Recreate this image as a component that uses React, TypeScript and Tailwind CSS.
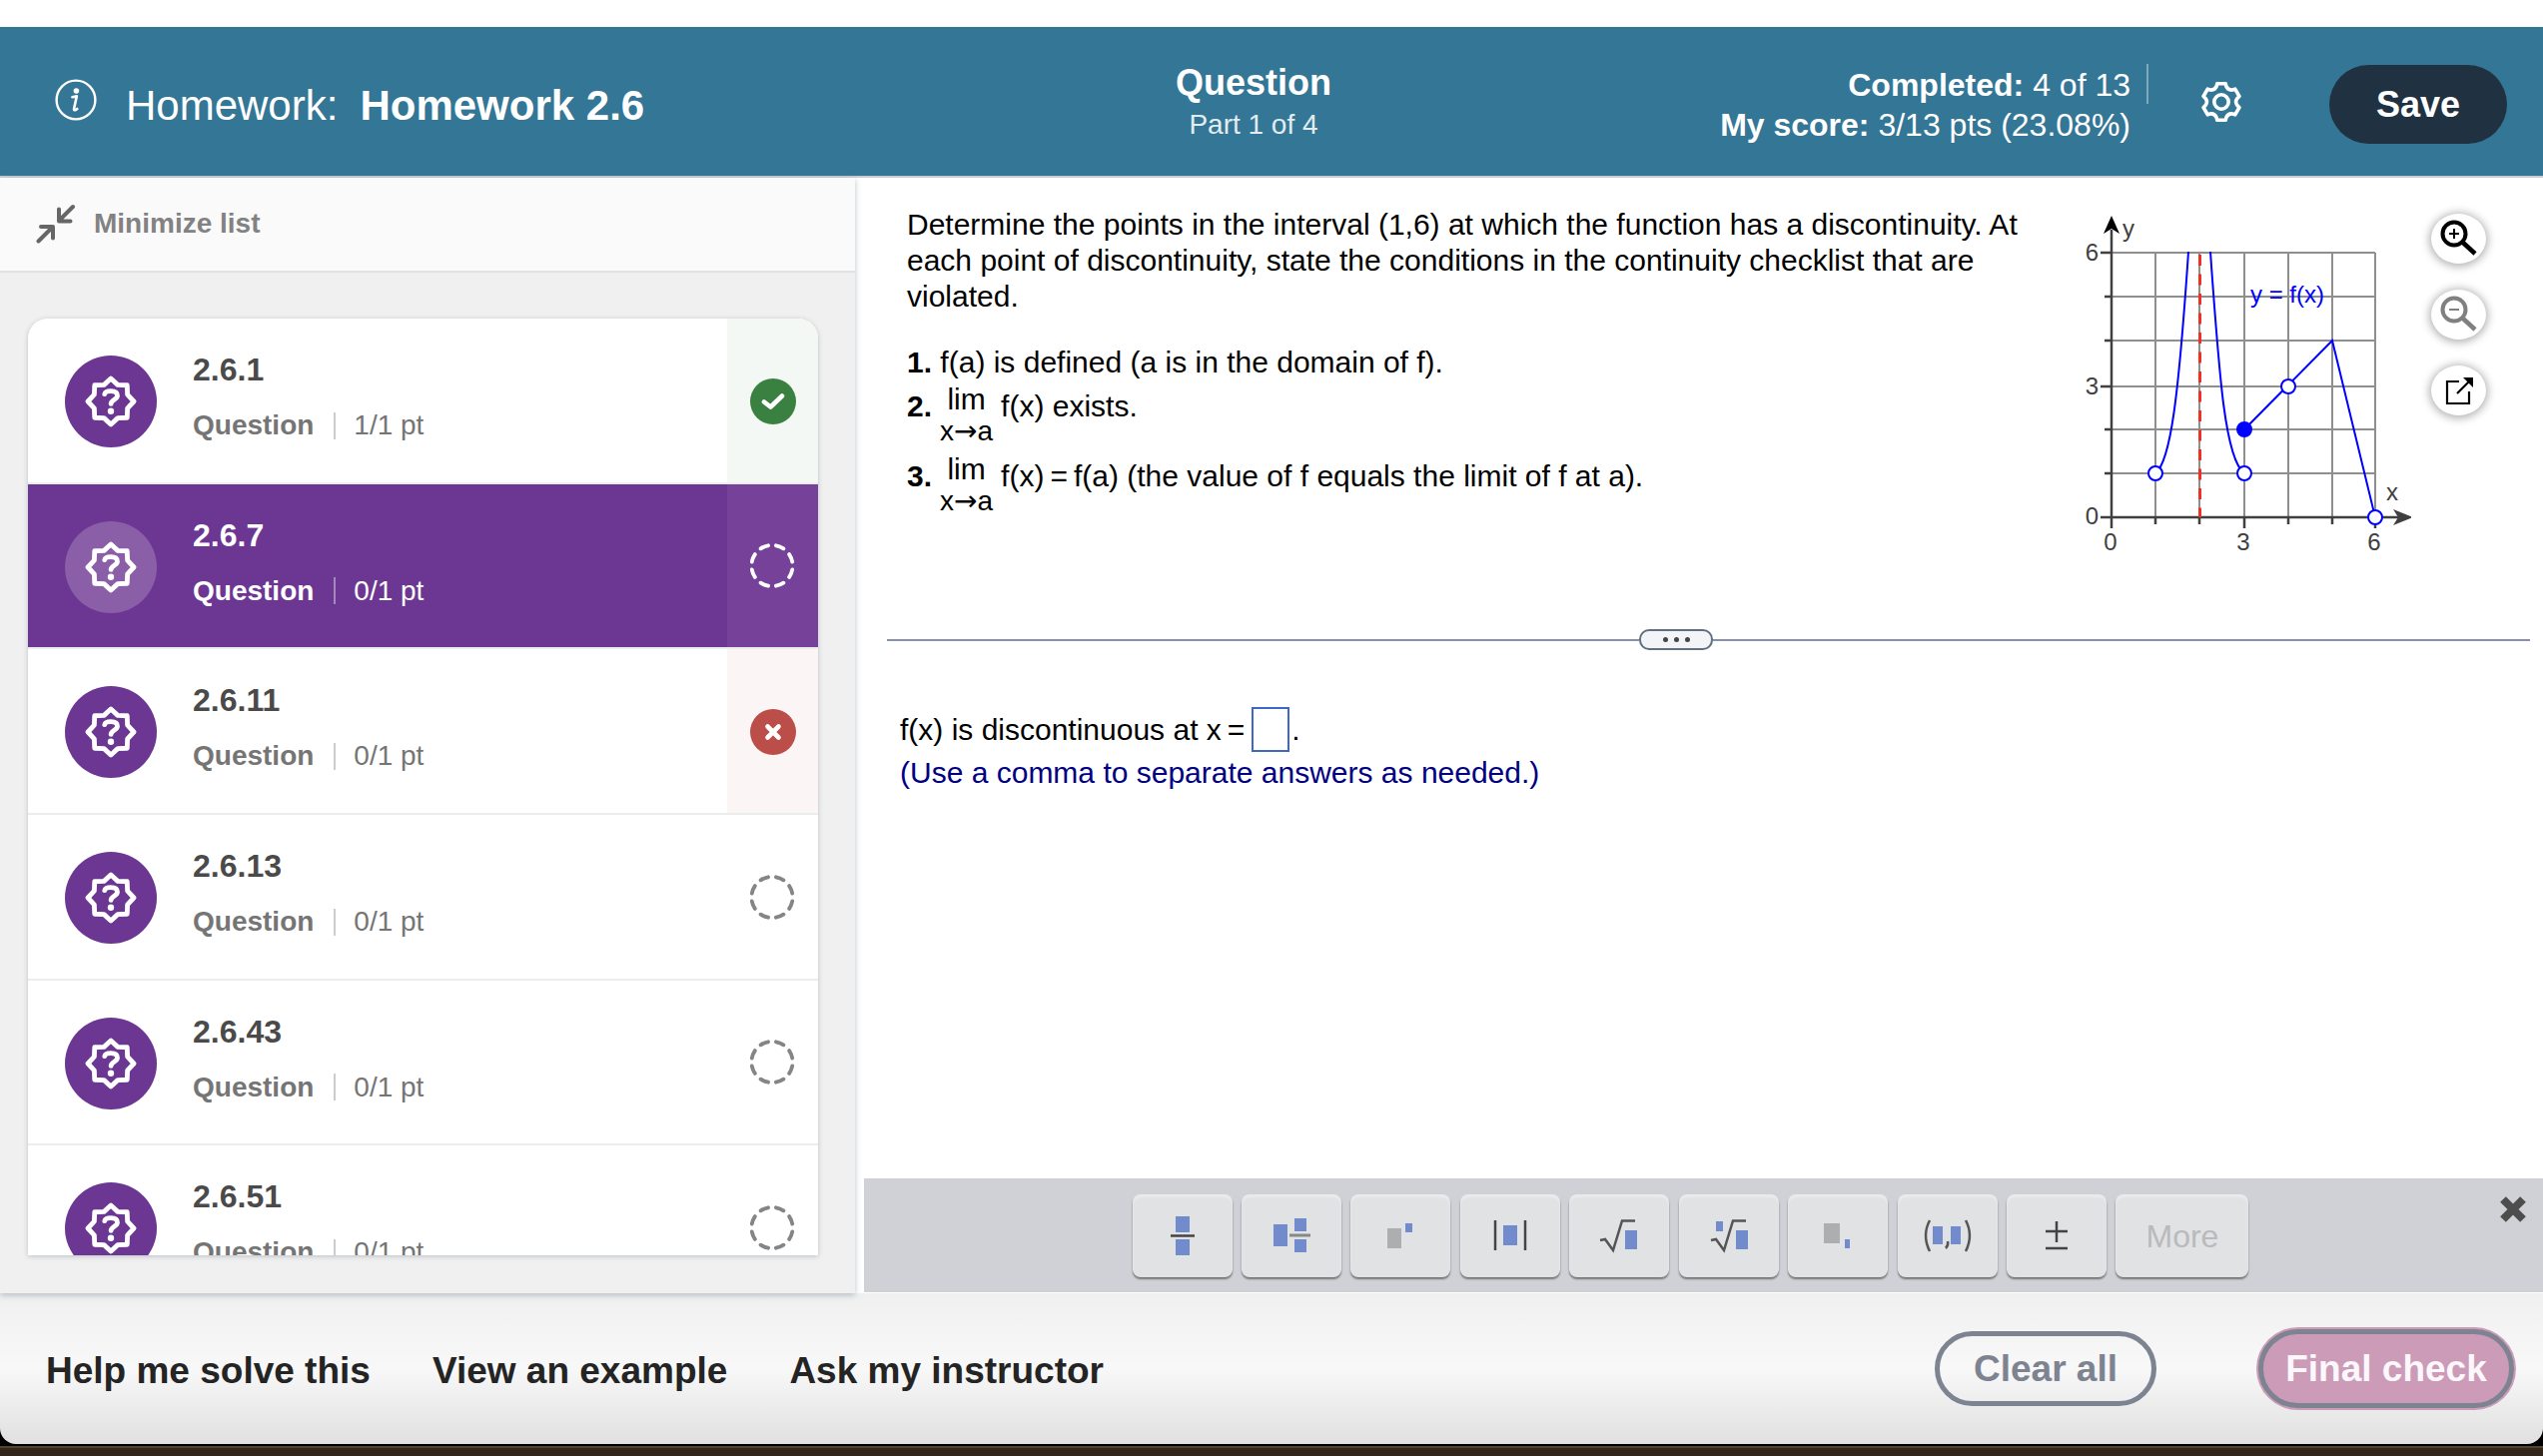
import React from "react";

const FONT = "font-['Liberation_Sans',Arial,sans-serif]";

type Status = "correct" | "wrong" | "open";
type Item = { id: string; score: string; status: Status; active?: boolean };

const items: Item[] = [
  { id: "2.6.1", score: "1/1 pt", status: "correct" },
  { id: "2.6.7", score: "0/1 pt", status: "open", active: true },
  { id: "2.6.11", score: "0/1 pt", status: "wrong" },
  { id: "2.6.13", score: "0/1 pt", status: "open" },
  { id: "2.6.43", score: "0/1 pt", status: "open" },
  { id: "2.6.51", score: "0/1 pt", status: "open" },
];

// Point at angle `deg` (clockwise from the top) on a circle of radius r around (c, c).
function polar(c: number, r: number, deg: number) {
  const a = (deg * Math.PI) / 180;
  return `${(c + r * Math.sin(a)).toFixed(2)} ${(c - r * Math.cos(a)).toFixed(2)}`;
}

const starPath =
  Array.from({ length: 16 }, (_, i) => `${i ? "L" : "M"}${polar(26, i % 2 ? 18 : 23, i * 22.5)}`).join("") + "Z";

const gearPath =
  Array.from({ length: 6 }, (_, i) => {
    const t = i * 60;
    return `${i ? "L" : "M"}${polar(24, 18.8, t - 13)}L${polar(24, 18.8, t + 13)}L${polar(24, 16.4, t + 17)}Q${polar(24, 13.2, t + 30)} ${polar(24, 16.4, t + 43)}`;
  }).join("") + "Z";

function QuestionBadge() {
  return (
    <svg className="size-[52px]" viewBox="0 0 52 52" fill="none" stroke="white" aria-hidden="true">
      <path d={starPath} strokeWidth="4.8" strokeLinejoin="round" />
      <path d="M19.8 18.6c.4-2.2 2.800-3 6.200-3s6.500 1.200 6.500 4.600c0 4-6.400 4-6.400 8.200" strokeWidth="4.8" strokeLinecap="round" strokeLinejoin="round" />
      <circle cx="26" cy="35.700" r="3.200" fill="white" stroke="none" />
    </svg>
  );
}

function StatusIcon({ status, active }: { status: Status; active?: boolean }) {
  if (status === "correct")
    return (
      <svg className="size-[46px]" viewBox="0 0 46 46" role="img" aria-label="Correct">
        <circle cx="23" cy="23" r="23" fill="#3a8040" />
        <path d="M14 23.500l6.500 5 11.500-11" fill="none" stroke="white" strokeWidth="4.600" strokeLinecap="round" strokeLinejoin="round" />
      </svg>
    );
  if (status === "wrong")
    return (
      <svg className="size-[46px]" viewBox="0 0 46 46" role="img" aria-label="Incorrect">
        <circle cx="23" cy="23" r="23" fill="#bb4e48" />
        <path d="M17.500 17.500l11 11M28.500 17.500l-11 11" stroke="white" strokeWidth="4.600" strokeLinecap="round" />
      </svg>
    );
  return (
    <svg className="size-[46px]" viewBox="0 0 46 46" role="img" aria-label="Not answered">
      <circle
        cx="22"
        cy="22.500"
        r="20.600"
        fill="none"
        stroke={active ? "#ffffff" : "#858585"}
        strokeWidth="3.800"
        strokeLinecap="round"
        pathLength="80"
        strokeDasharray="5 5"
        strokeDashoffset="-2.500"
      />
    </svg>
  );
}

const statusBg: Record<Status, string> = {
  correct: "bg-[#f3f8f4]",
  wrong: "bg-[#fcf5f5]",
  open: "bg-white",
};

function ListRow({ item }: { item: Item }) {
  const a = item.active;
  return (
    <li className="flex border-b-2 border-[#ebecec]">
      <button className={`flex flex-1 items-stretch text-left ${a ? "bg-[#6c3693]" : "bg-white"}`}>
        <span className={`mt-[37px] ml-[37px] flex size-[92px] items-center justify-center rounded-full ${a ? "bg-[#8a5fa8]" : "bg-[#6c3693]"}`}>
          <QuestionBadge />
        </span>
        <span className="ml-9 flex flex-1 flex-col pt-[31px]">
          <span className={`text-[32px] leading-10 font-bold ${a ? "text-white" : "text-[#4a4a4a]"}`}>{item.id}</span>
          <span className={`mt-4 flex items-center text-[28px] leading-10 ${a ? "text-white" : "text-[#757575]"}`}>
            <span className="font-bold">Question</span>
            <span className={`mr-[18px] ml-5 h-[27px] w-[2px] ${a ? "bg-[#a688bd]" : "bg-[#cccccc]"}`} />
            <span>{item.score}</span>
          </span>
        </span>
        <span className={`flex w-[91px] items-center justify-center pt-[2px] ${a ? "bg-[#764299]" : statusBg[item.status]}`}>
          <StatusIcon status={item.status} active={a} />
        </span>
      </button>
    </li>
  );
}

function Header() {
  return (
    <header className="grid h-[151px] grid-cols-[1fr_auto_1fr] border-b-2 border-[#c9ccd6] bg-[#337696] text-white">
      <div className="flex items-center pl-[54px]">
        <button aria-label="Information" className="mb-1">
          <svg className="size-11" viewBox="0 0 44 44" fill="none" aria-hidden="true">
            <circle cx="22" cy="22" r="19.400" stroke="white" strokeWidth="2.400" />
            <circle cx="22.400" cy="13" r="2.800" fill="white" />
            <path d="M18.400 19.200l4.400-.8-2.700 12.400c-.4 2 1 2 3.200.2" stroke="white" strokeWidth="2.600" strokeLinecap="round" strokeLinejoin="round" />
          </svg>
        </button>
        <h1 className="ml-7 flex gap-[22px] pt-2 text-[42px] leading-[48px]">
          <span>Homework:</span>
          <span className="font-bold">Homework 2.6</span>
        </h1>
      </div>
      <div className="pt-9 pr-9 text-center">
        <p className="text-[36px] leading-10 font-bold">Question</p>
        <p className="mt-1 text-[28px] leading-9 text-[#e3ecf1]">Part 1 of 4</p>
      </div>
      <div className="flex justify-end pr-9">
        <div className="pt-[38px] text-right text-[32px] leading-10">
          <p><b>Completed:</b> 4 of 13</p>
          <p><b>My score:</b> 3/13 pts (23.08%)</p>
        </div>
        <div className="mt-[37px] ml-4 h-10 w-[2px] bg-[#7fa9bd]" />
        <button aria-label="Settings" className="ml-[49px] self-center">
          <svg className="size-12" viewBox="0 0 48 48" fill="none" stroke="white" strokeWidth="3.600" strokeLinejoin="round" aria-hidden="true">
            <path d={gearPath} />
            <circle cx="24" cy="24" r="7.200" />
          </svg>
        </button>
        <button className="mt-[38px] ml-[84px] h-[79px] w-[178px] rounded-full bg-[#203241] text-[36px] font-bold">Save</button>
      </div>
    </header>
  );
}

function Sidebar() {
  return (
    <aside className="z-10 flex w-[856px] shrink-0 flex-col bg-[#f0f0f0] shadow-[0_2px_6px_rgba(120,140,155,0.5)]">
      <div className="flex h-[95px] shrink-0 items-center border-b-2 border-[#e2e2e2] bg-[#fafafa] pb-[2px] pl-9">
        <button className="flex items-center gap-[18px] text-[28px] leading-9 font-bold text-[#828282]">
          <svg className="size-10" viewBox="0 0 40 40" fill="none" stroke="#666666" strokeWidth="4" strokeLinecap="round" strokeLinejoin="round" aria-hidden="true">
            <path d="M37 3L23 17M23 5.500v12H34.500M2.500 37.500l14-14M5 23h12V34.500" />
          </svg>
          Minimize list
        </button>
      </div>
      <div className="mt-[46px] mr-[37px] mb-[38px] ml-7 min-h-0 flex-1 overflow-hidden rounded-t-[20px] shadow-[0_1px_5px_rgba(100,120,140,0.4)]">
        <ul className="grid h-[994px] grid-rows-6">
          {items.map((it) => (
            <ListRow key={it.id} item={it} />
          ))}
        </ul>
      </div>
    </aside>
  );
}

function Graph() {
  const gx = [2158, 2202, 2247, 2291, 2335, 2378];
  const gy = [253, 297, 341, 387, 430, 474];
  return (
    <svg className="h-[352px] w-[344px]" viewBox="2070 207 344 352" role="img" aria-label="Graph of y = f(x)" fontFamily="Liberation Sans, Arial, sans-serif" fontSize="24">
      <g stroke="#8f8f8f" strokeWidth="2">
        {gx.map((x) => <path key={x} d={`M${x} 253V518`} />)}
        {gy.map((y) => <path key={y} d={`M2114 ${y}H2378`} />)}
      </g>
      <g stroke="#404040" strokeWidth="2.500">
        <path d="M2114 518V230M2103 518H2404M2103 387h11M2103 253h11M2114 518v11M2247 518v11M2378 518v11" />
        <path d="M2107 297h7M2107 341h7M2107 430h7M2107 474h7M2158 518v7M2202 518v7M2291 518v7M2335 518v7" />
      </g>
      <path d="M2114 216l8 18-8-5-8 5z" fill="black" />
      <path d="M2416 518l-20-8 5 8-5 8z" fill="#404040" />
      <path d="M2202.500 255V518" stroke="#ee3124" strokeWidth="3" strokeDasharray="11 8.500" />
      <g stroke="#0000ff" strokeWidth="2" fill="none">
        <path d="M2158 474C2173 462 2181 400 2191 252M2213 252C2222 380 2228 460 2247 474M2247 430L2335 341L2378 518" />
        <circle cx="2247" cy="430" r="7" fill="#0000ff" />
        <circle cx="2158" cy="474" r="7" fill="white" />
        <circle cx="2247" cy="474" r="7" fill="white" />
        <circle cx="2291" cy="387" r="7" fill="white" />
        <circle cx="2378" cy="518" r="7" fill="white" />
      </g>
      <text x="2253" y="303" fill="#0000ff">y = f(x)</text>
      <g fill="#404040">
        <text x="2125" y="237">y</text>
        <text x="2389" y="501">x</text>
        <g textAnchor="end">
          <text x="2101" y="261">6</text>
          <text x="2101" y="395">3</text>
          <text x="2101" y="525">0</text>
        </g>
        <g textAnchor="middle">
          <text x="2113" y="551">0</text>
          <text x="2246" y="551">3</text>
          <text x="2377" y="551">6</text>
        </g>
      </g>
    </svg>
  );
}

function RoundButton({ label, children }: { label: string; children: React.ReactNode }) {
  return (
    <button aria-label={label} className="flex h-[50px] w-[55px] items-center justify-center rounded-[50%] bg-white shadow-[0_1px_8px_2px_rgba(0,0,0,0.3)]">
      {children}
    </button>
  );
}

function Magnifier({ plus }: { plus?: boolean }) {
  const c = plus ? "#000000" : "#808080";
  return (
    <svg className="size-10" viewBox="0 0 40 40" fill="none" stroke={c} aria-hidden="true">
      <circle cx="15" cy="15" r="11.500" strokeWidth="4" />
      <path d="M24 24l12 11" strokeWidth="4.600" />
      <path d={plus ? "M10 15h10M15 10v10" : "M10 15h10"} strokeWidth="2" />
    </svg>
  );
}

function Lim() {
  return (
    <span className="inline-flex flex-col items-center pt-[3px]">
      <span className="text-[30px] leading-8">lim</span>
      <span className="text-[28px] leading-8">
        x<span className="font-['DejaVu_Sans',sans-serif]">→</span>a
      </span>
    </span>
  );
}

const BLUE = "#728bcd";

const keys: { label: string; art: React.ReactNode }[] = [
  { label: "Fraction", art: <><path d="M43 22h14v16H43zM43 45h14v16H43z" fill={BLUE} /><path d="M38 41.500h24" stroke="#444" strokeWidth="2.500" /></> },
  { label: "Mixed number", art: <><path d="M32 30h14v22H32zM53 24h12v13H53zM53 45h12v13H53z" fill={BLUE} /><path d="M48 41h21" stroke="#888" strokeWidth="3" /></> },
  { label: "Exponent", art: <><path d="M37 34h14v20H37z" fill="#adaeb0" /><path d="M55 29h7v9h-7z" fill={BLUE} /></> },
  { label: "Absolute value", art: <><path d="M43 31h14v20H43z" fill={BLUE} /><path d="M35 26v30M65 26v30" stroke="#444" strokeWidth="2.500" /></> },
  { label: "Square root", art: <><path d="M56 36h12v19H56z" fill={BLUE} /><path d="M31 46l5-1 8 11 9-29.500h13" fill="none" stroke="#555" strokeWidth="2.500" /></> },
  { label: "Nth root", art: <><path d="M57 36h12v19H57zM37 27h7v10h-7z" fill={BLUE} /><path d="M32 46l5-1 8 11 9-29.500h13" fill="none" stroke="#555" strokeWidth="2.500" /></> },
  { label: "Subscript", art: <><path d="M36 29h16v20H36z" fill="#adaeb0" /><path d="M57 45h5v9h-5z" fill={BLUE} /></> },
  { label: "Ordered pair", art: <><path d="M35 32h10v18H35zM53 32h10v18H53z" fill={BLUE} /><path d="M32 26q-8 15 0 31M68 26q8 15 0 31M50 47q1 4-2 7" fill="none" stroke="#555" strokeWidth="2.500" /></> },
  { label: "Plus or minus", art: <path d="M39 37h22M50 27v21M39 54h22" stroke="#444" strokeWidth="2.500" /> },
];

function MathToolbar() {
  return (
    <div className="relative ml-[9px] flex h-[114px] justify-center bg-[#d0d1d6] pt-4 pr-[26px]">
      <div className="flex h-[83px] w-[1118px] justify-between">
        {keys.map((k) => (
          <button key={k.label} aria-label={k.label} className="h-[83px] w-[100px] rounded-lg bg-[#e1e2e4] shadow-[0_2px_2px_rgba(0,0,0,0.45),inset_0_3px_3px_rgba(255,255,255,0.35)]">
            <svg viewBox="0 0 100 83" className="h-[83px] w-[100px]" aria-hidden="true">{k.art}</svg>
          </button>
        ))}
        <button className="h-[83px] w-[133px] rounded-lg bg-[#e1e2e4] text-[32px] text-[#b9babc] shadow-[0_2px_2px_rgba(0,0,0,0.45),inset_0_3px_3px_rgba(255,255,255,0.35)]">More</button>
      </div>
      <button aria-label="Close toolbar" className="absolute top-[18px] right-[17px]">
        <svg className="size-[26px]" viewBox="0 0 26 26" aria-hidden="true">
          <path d="M3 3l20 20M23 3L3 23" stroke="#4d4d4d" strokeWidth="8" />
        </svg>
      </button>
    </div>
  );
}

function Main() {
  return (
    <main className="flex min-w-0 flex-1 flex-col bg-white text-black">
      <section className="flex pt-[29px] pl-[52px] text-[30px] leading-9">
        <div className="w-[1130px]">
          <p>
            Determine the points in the interval (1,6) at which the function has a discontinuity. At each point of discontinuity, state the conditions in the continuity checklist that are violated.
          </p>
          <ol className="mt-[30px]">
            <li><b>1.</b> f(a) is defined (a is in the domain of f).</li>
            <li className="flex h-[70px]">
              <b className="mr-2 pt-2">2.</b>
              <Lim />
              <span className="ml-2 pt-2">f(x) exists.</span>
            </li>
            <li className="flex h-[70px]">
              <b className="mr-2 pt-2">3.</b>
              <Lim />
              <span className="ml-2 pt-2">
                f(x)<span className="mx-[6px]">=</span>f(a) (the value of f equals the limit of f at a).
              </span>
            </li>
          </ol>
        </div>
        <div className="ml-auto flex pr-[57px]">
          <Graph />
          <div className="mt-[7px] ml-5 flex flex-col gap-[26px]">
            <RoundButton label="Zoom in"><Magnifier plus /></RoundButton>
            <RoundButton label="Zoom out"><Magnifier /></RoundButton>
            <RoundButton label="Open in new window">
              <svg className="size-8" viewBox="0 0 32 32" fill="none" stroke="black" strokeWidth="2.200" aria-hidden="true">
                <path d="M16 7H4v22h22V17M14 19L26 7" />
                <path d="M20 3h10v10z" fill="black" stroke="none" />
              </svg>
            </RoundButton>
          </div>
        </div>
      </section>
      <div className="mt-[71px] mr-[13px] ml-8 flex items-center">
        <hr className="flex-[753_1_0%] border-t-2 border-[#8791a3]" />
        <button aria-label="Resize panels" className="flex h-[21px] w-[74px] items-center justify-center gap-[6px] rounded-[10px] border-2 border-[#607080] bg-[#f3f4f7]">
          <span className="size-[5px] rounded-full bg-[#444]" />
          <span className="size-[5px] rounded-full bg-[#444]" />
          <span className="size-[5px] rounded-full bg-[#444]" />
        </button>
        <hr className="flex-[818_1_0%] border-t-2 border-[#8791a3]" />
      </div>
      <section className="mt-[57px] pl-[45px] text-[30px]">
        <div className="flex h-[45px] items-center leading-9">
          <label htmlFor="answer">
            f(x) is discontinuous at x<span className="ml-[6px]">=</span>
          </label>
          <input id="answer" className="mr-[2px] ml-[7px] h-[45px] w-[38px] border-2 border-[#4067c4] outline-none" />
          <span>.</span>
        </div>
        <p className="mt-[3px] leading-9 text-[#000080]">(Use a comma to separate answers as needed.)</p>
      </section>
      <div className="mt-auto pb-px">
        <MathToolbar />
      </div>
    </main>
  );
}

function Footer() {
  return (
    <footer className="flex h-[151px] items-center rounded-b-2xl bg-linear-to-b from-[#f0f0f0] via-[#f8f8f8] to-[#e0e0e0] pr-[27px] pl-[46px] text-[37px] font-bold">
      <nav className="flex gap-[62px] pt-1 text-[#242424]">
        <a href="#help">Help me solve this</a>
        <a href="#example">View an example</a>
        <a href="#instructor">Ask my instructor</a>
      </nav>
      <button className="ml-auto h-[75px] w-[222px] rounded-full border-5 border-[#7d8391] text-[#7d8391]">Clear all</button>
      <button className="ml-[100px] h-[83px] w-[260px] rounded-full bg-[#cb9bb8] p-[2px] text-[#fbf7fa]">
        <span className="flex size-full items-center justify-center rounded-full border-5 border-[#7d8391]">Final check</span>
      </button>
    </footer>
  );
}

export default function App() {
  return (
    <div className={`flex h-screen flex-col bg-black ${FONT}`}>
      <div className="h-[27px] shrink-0 bg-white" />
      <Header />
      <div className="flex min-h-0 flex-1 bg-white">
        <Sidebar />
        <Main />
      </div>
      <Footer />
      <div className="mt-[2px] h-[10px] shrink-0 border-t-2 border-[#51452f] bg-[#32261a]" />
    </div>
  );
}
